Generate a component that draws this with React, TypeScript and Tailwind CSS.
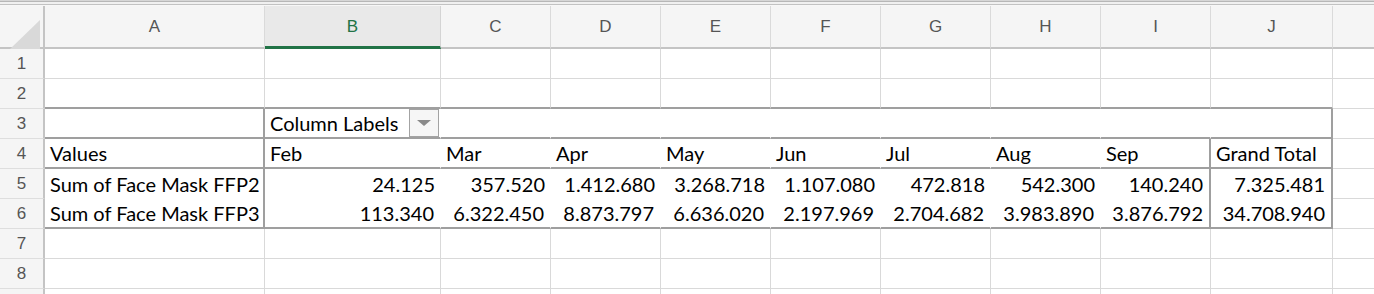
import React from "react";

const CELL_FONT = { fontFamily: "Lato, 'Noto Sans', sans-serif" };
const HEAD_FONT = { fontFamily: "'Liberation Sans', Arial, sans-serif" };

type ColDef = { key: string; w: string };
const COLS: ColDef[] = [
  { key: "A", w: "w-[220px]" },
  { key: "B", w: "w-[176px]" },
  { key: "C", w: "w-[110px]" },
  { key: "D", w: "w-[110px]" },
  { key: "E", w: "w-[110px]" },
  { key: "F", w: "w-[110px]" },
  { key: "G", w: "w-[110px]" },
  { key: "H", w: "w-[110px]" },
  { key: "I", w: "w-[110px]" },
  { key: "J", w: "w-[122px]" },
];

const GRID = "border-r border-b border-[#d9d9d9]";
const B_DARK = "border-r border-r-transparent border-b-2 border-b-[#9f9f9f]";
const BR_DARK = "border-r-2 border-r-[#9f9f9f] border-b-2 border-b-[#9f9f9f]";
const R_DARK = "border-r-2 border-r-[#9f9f9f]";
const NONE = "";
const R_GRID_B_DARK = "border-r border-r-[#d9d9d9] border-b-2 border-b-[#9f9f9f]";

type Cell = { text?: string; align?: "l" | "r"; border: string; dropdown?: boolean };

const feb = ["Feb", "Mar", "Apr", "May", "Jun", "Jul", "Aug", "Sep"];
const r5 = ["24.125", "357.520", "1.412.680", "3.268.718", "1.107.080", "472.818", "542.300", "140.240"];
const r6 = ["113.340", "6.322.450", "8.873.797", "6.636.020", "2.197.969", "2.704.682", "3.983.890", "3.876.792"];

function emptyRow(border: string): Cell[] {
  return COLS.map(() => ({ border }));
}

const rows: { n: number; label: string; cells: Cell[] }[] = [
  { n: 1, label: "1", cells: emptyRow(GRID) },
  { n: 2, label: "2", cells: emptyRow(R_GRID_B_DARK) },
  {
    n: 3,
    label: "3",
    cells: [
      { border: BR_DARK },
      { text: "Column Labels", border: B_DARK, dropdown: true },
      ...Array.from({ length: 7 }, () => ({ border: B_DARK })),
      { border: BR_DARK },
    ],
  },
  {
    n: 4,
    label: "4",
    cells: [
      { text: "Values", border: BR_DARK },
      ...feb.map((t, i) => ({ text: t, border: i === 7 ? BR_DARK : B_DARK })),
      { text: "Grand Total", border: BR_DARK },
    ],
  },
  {
    n: 5,
    label: "5",
    cells: [
      { text: "Sum of Face Mask FFP2", border: R_DARK },
      ...r5.map((t, i) => ({ text: t, align: "r" as const, border: i === 7 ? R_DARK : NONE })),
      { text: "7.325.481", align: "r", border: R_DARK },
    ],
  },
  {
    n: 6,
    label: "6",
    cells: [
      { text: "Sum of Face Mask FFP3", border: BR_DARK },
      ...r6.map((t, i) => ({ text: t, align: "r" as const, border: i === 7 ? BR_DARK : B_DARK })),
      { text: "34.708.940", align: "r", border: BR_DARK },
    ],
  },
  { n: 7, label: "7", cells: emptyRow(GRID) },
  { n: 8, label: "8", cells: emptyRow(GRID) },
  { n: 9, label: "", cells: emptyRow(GRID) },
];

function Dropdown() {
  return (
    <div className="absolute right-[1px] top-0 h-[28px] w-[30px] border border-[#a3a3a3] bg-[#f6f6f6] flex items-center justify-center">
      <svg width="16" height="8" viewBox="0 0 16 8">
        <polygon points="1,1 15,1 8,7" fill="#8a8a8a" />
      </svg>
    </div>
  );
}

export default function App() {
  return (
    <div className="w-[1374px] h-[294px] overflow-hidden bg-white select-none">
      {/* top double line */}
      <div className="h-[1px] bg-[#d6d6d6]" />
      <div className="h-[1px] bg-[#b7b7b7]" />
      <div className="h-[2px] bg-[#f0f0f0]" />
      <div className="h-[1px] bg-[#c2c2c2]" />
      <div className="h-[1px] bg-[#f7f7f7]" />
      {/* column header row */}
      <div className="flex h-[43px] bg-[#f5f5f5]">
        <div className="relative w-[45px] shrink-0 border-r-2 border-r-[#c4c4c4] border-b-2 border-b-[#c4c4c4]">
          <svg className="absolute left-[10px] top-[14px]" width="31" height="30" viewBox="0 0 31 30">
            <polygon points="0,29 30,29 30,0" fill="#d9d9d9" />
          </svg>
        </div>
        {COLS.map((c) =>
          c.key === "B" ? (
            <div
              key={c.key}
              className={`${c.w} shrink-0 flex items-center justify-center pt-[2px] bg-[#e9e9e9] border-r border-r-[#d4d4d4] border-b-[3px] border-b-[#217346] text-[17px] text-[#217346] font-medium`}
              style={HEAD_FONT}
            >
              {c.key}
            </div>
          ) : (
            <div
              key={c.key}
              className={`${c.w} shrink-0 flex items-center justify-center pt-[1px] border-r border-r-[#dadada] border-b-2 border-b-[#c4c4c4] text-[17px] text-[#555555]`}
              style={HEAD_FONT}
            >
              {c.key}
            </div>
          )
        )}
        <div className="flex-1 border-b-2 border-b-[#c4c4c4]" />
      </div>
      {rows.map((r) => (
        <div key={r.n} className="flex h-[30px]">
          <div
            className="w-[45px] shrink-0 flex items-center justify-center bg-[#f5f5f5] border-r-2 border-r-[#c4c4c4] border-b border-b-[#dedede] text-[17px] text-[#555555]"
            style={HEAD_FONT}
          >
            {r.label}
          </div>
          {r.cells.map((c, i) => (
            <div
              key={i}
              className={`${COLS[i].w} shrink-0 relative flex items-center whitespace-nowrap text-[20px] text-black leading-none ${
                c.align === "r" ? "justify-end pr-[6px]" : "justify-start pl-[5px]"
              } ${c.border}`}
              style={CELL_FONT}
            >
              {c.text}
              {c.dropdown && <Dropdown />}
            </div>
          ))}
          <div className="flex-1 border-b border-[#d9d9d9]" />
        </div>
      ))}
    </div>
  );
}
